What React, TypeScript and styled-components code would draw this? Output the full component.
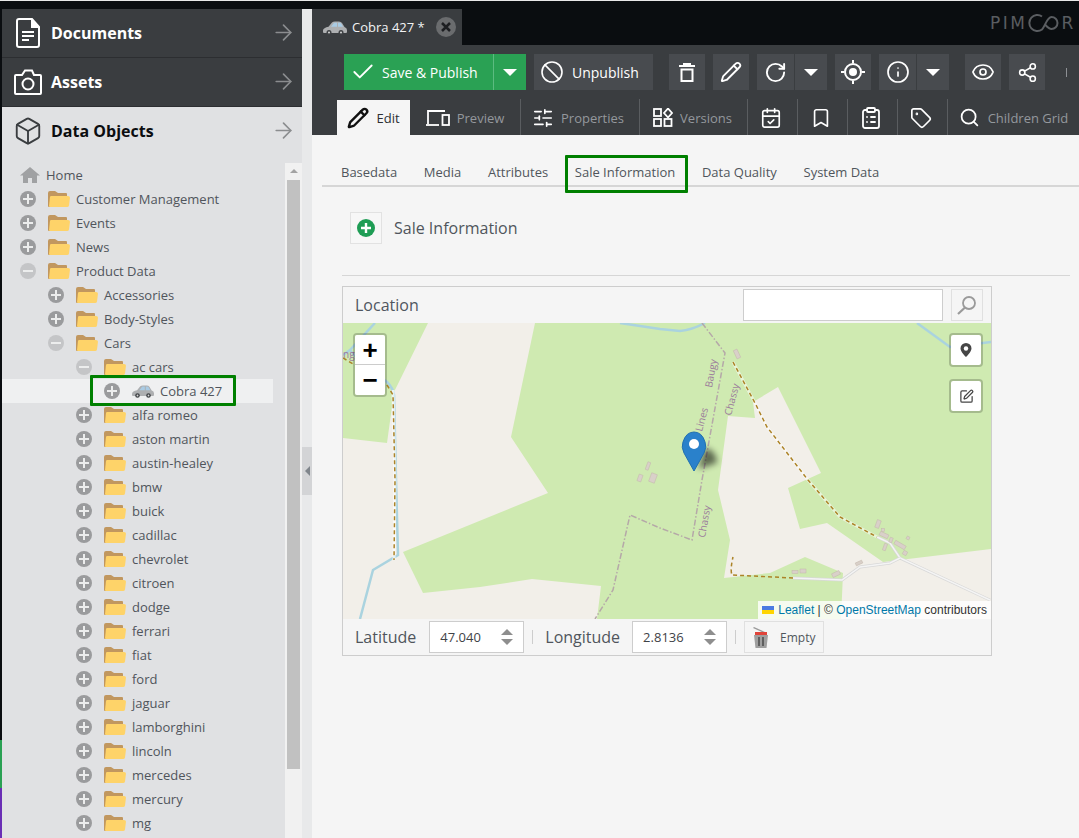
import { FC, ReactNode } from "react"
import styled, { createGlobalStyle } from "styled-components"
import {
  ArrowRight, Ban, Bookmark, Box, CalendarCheck, Check, ClipboardList, Eye, Info, Pencil,
  RotateCw, Search, Share2, SlidersHorizontal, SquarePen, Tag,
} from "lucide-react"

const GlobalStyle = createGlobalStyle`
  html, body {
    margin: 0;
    padding: 0;
    background: #f5f5f5;
  }
  * {
    box-sizing: border-box;
  }
`

const Page = styled.div`
  display: flex;
  width: 1079px;
  height: 838px;
  overflow: hidden;
  border-top: 1px solid #e8e8e8;
  background: #0a0d10;
  font-family: "Open Sans", sans-serif;
  font-size: 13px;
  color: #50555c;
`

const Strip = styled.div`
  display: flex;
  flex-direction: column;
  flex: 0 0 2px;
`

const StripPart = styled.div<{ $color: string; $size: number }>`
  flex: 0 0 ${(p) => p.$size}px;
  background: ${(p) => p.$color};
`

const Sidebar = styled.aside`
  display: flex;
  flex-direction: column;
  flex: 0 0 300px;
  margin-top: 8px;
  background: #e0e1e3;
`

const AccordionHead = styled.div<{ $open?: boolean }>`
  display: flex;
  align-items: center;
  flex: 0 0 49px;
  padding: 0 6px 1px 11px;
  background: ${(p) => (p.$open ? "#e0e1e3" : "#3a3d40")};
  border-bottom: 1px solid ${(p) => (p.$open ? "transparent" : "#2c2e31")};
  color: ${(p) => (p.$open ? "#0b0d10" : "#fff")};
  font-size: 16px;
  font-weight: 700;
`

const HeadIcon = styled.span`
  display: flex;
  justify-content: center;
  flex: 0 0 30px;
  margin-right: 8px;
`

const HeadTitle = styled.span`
  flex: 1;
`

const TreeArea = styled.div`
  display: flex;
  flex: 1;
  min-height: 0;
  margin-top: 7px;
`

const TreeList = styled.div`
  flex: 1;
  padding-right: 12px;
`

const Row = styled.div<{ $level: number; $selected?: boolean }>`
  position: relative;
  display: flex;
  align-items: center;
  height: 24px;
  padding-left: ${(p) => 18 + p.$level * 28}px;
  background: ${(p) => (p.$selected ? "#eff0f1" : "transparent")};
  white-space: nowrap;
`

const Highlight = styled.div`
  position: absolute;
  left: 88px;
  top: -4px;
  width: 146px;
  height: 31px;
  border: 3px solid #008000;
  border-radius: 1px;
`

const Expander = styled.span<{ $open?: boolean }>`
  position: relative;
  flex: 0 0 16px;
  height: 16px;
  margin-right: 12px;
  border-radius: 50%;
  background: ${(p) => (p.$open ? "#c4c5c7" : "#9a9b9d")};

  &::before {
    content: "";
    position: absolute;
    left: 3px;
    top: 7px;
    width: 10px;
    height: 2px;
    background: #eceded;
  }

  &::after {
    content: "";
    display: ${(p) => (p.$open ? "none" : "block")};
    position: absolute;
    left: 7px;
    top: 3px;
    width: 2px;
    height: 10px;
    background: #eceded;
  }
`

const NodeLabel = styled.span`
  margin-left: 6px;
`

const HomeLabel = styled.span`
  margin-left: 6px;
`

const Scrollbar = styled.div`
  display: flex;
  flex-direction: column;
  flex: 0 0 17px;
  padding: 0 2px;
  background: #f1f1f1;
`

const ScrollUp = styled.div`
  flex: 0 0 17px;
  display: flex;
  justify-content: center;
  padding-top: 6px;

  &::before {
    content: "";
    width: 0;
    height: 0;
    border-left: 4px solid transparent;
    border-right: 4px solid transparent;
    border-bottom: 4px solid #a3a3a3;
  }
`

const ScrollThumb = styled.div`
  flex: 0 0 589px;
  background: #c1c1c1;
`

const Collapser = styled.div`
  flex: 0 0 10px;
  margin-top: 8px;
  padding-top: 438px;
  background: #e8e9ea;
`

const CollapserHandle = styled.div`
  display: flex;
  align-items: center;
  justify-content: center;
  height: 48px;
  background: #d3d4d6;

  &::before {
    content: "";
    width: 0;
    height: 0;
    border-top: 5px solid transparent;
    border-bottom: 5px solid transparent;
    border-right: 5px solid #80868c;
  }
`

const Main = styled.main`
  display: flex;
  flex-direction: column;
  flex: 1;
  min-width: 0;
`

const TopBar = styled.div`
  display: flex;
  justify-content: space-between;
  flex: 0 0 44px;
  padding-top: 8px;
`

const DocTab = styled.div`
  display: flex;
  align-items: center;
  width: 150px;
  padding: 0 6px 0 11px;
  background: #3a3d40;
  color: #f2f3f4;
  white-space: nowrap;
`

const DocTabTitle = styled.span`
  flex: 1;
  margin-left: 5px;
`

const CloseBadge = styled.span`
  display: flex;
  align-items: center;
  justify-content: center;
  width: 20px;
  height: 20px;
  border-radius: 50%;
  background: #6a6c6e;
  color: #1d1f22;
`

const Logo = styled.div`
  display: flex;
  align-items: center;
  width: 89px;
  height: 20px;
  margin-top: 4px;
  color: #5a5d61;
  font-family: "DejaVu Sans", sans-serif;
  font-size: 17px;
  letter-spacing: 2.5px;
  white-space: nowrap;
`

const LogoMark = styled.svg`
  flex: 0 0 32px;
  margin: 0 2px 0 0;
`

const Toolbar = styled.div`
  display: flex;
  flex-direction: column;
  flex: 0 0 90px;
  background: #3a3d40;
`

const ButtonRow = styled.div`
  display: flex;
  align-items: center;
  margin-top: 9px;
  padding-left: 32px;
`

const Btn = styled.div<{ $w: number; $after?: number; $green?: boolean; $start?: number }>`
  display: flex;
  align-items: center;
  justify-content: ${(p) => (p.$start ? "flex-start" : "center")};
  flex: 0 0 ${(p) => p.$w}px;
  height: 36px;
  margin-right: ${(p) => p.$after ?? 0}px;
  padding-left: ${(p) => p.$start ?? 0}px;
  background: ${(p) => (p.$green ? "#2aa154" : "#484b4f")};
  color: #fff;
  font-size: 14px;
  white-space: nowrap;
`

const BtnText = styled.span<{ $gap: number }>`
  margin-left: ${(p) => p.$gap}px;
`

const Caret = styled.span`
  width: 0;
  height: 0;
  border-left: 7px solid transparent;
  border-right: 7px solid transparent;
  border-top: 7px solid #fff;
`

const SplitLine = styled.div`
  flex: 0 0 1px;
  height: 36px;
  background: #5cbb80;
`

const Tick = styled.span`
  margin-left: 21px;
  width: 1px;
  height: 9px;
  background: #8d9094;
`

const TabRow = styled.div`
  display: flex;
  align-items: flex-end;
  height: 36px;
  margin-top: 9px;
  padding-left: 25px;
`

const ViewTab = styled.div<{ $w: number; $active?: boolean; $last?: boolean; $nudge?: number }>`
  display: flex;
  align-items: center;
  justify-content: center;
  gap: ${(p) => (p.$last ? 8 : 7)}px;
  flex: 0 0 ${(p) => p.$w}px;
  height: ${(p) => (p.$active ? 35 : 36)}px;
  padding: 1px ${(p) => p.$nudge ?? 0}px 0 0;
  background: ${(p) => (p.$active ? "#f5f5f5" : "transparent")};
  border-right: ${(p) => (p.$active || p.$last ? "none" : "1px solid #5a5d60")};
  color: ${(p) => (p.$active ? "#2d2f33" : "#94989d")};
  white-space: nowrap;
`

const Content = styled.div`
  flex: 1;
  min-height: 0;
  background: #f5f5f5;
`

const InnerTabs = styled.div`
  display: flex;
  gap: 26.7px;
  height: 52px;
  margin-left: 10px;
  padding: 27px 0 0 19px;
  border-bottom: 2px solid #d6d6d6;
`

const InnerTab = styled.span`
  position: relative;
  line-height: 20px;
  white-space: nowrap;
`

const InnerHighlight = styled.span`
  position: absolute;
  left: -10px;
  top: -7px;
  width: 123px;
  height: 38px;
  border: 3px solid #008000;
  border-radius: 1px;
`

const BlockHead = styled.div`
  display: flex;
  align-items: center;
  margin: 25px 9px 0 30px;
  padding: 0 8px 31px;
  border-bottom: 1px solid #d6d6d6;
  font-size: 16px;
`

const AddButton = styled.div`
  display: flex;
  align-items: center;
  justify-content: center;
  width: 32px;
  height: 32px;
  margin-right: 12px;
  border: 1px solid #e2e2e2;
  background: #f7f7f7;
`

const LocationPanel = styled.section`
  display: flex;
  flex-direction: column;
  width: 650px;
  height: 370px;
  margin: 10px 0 0 30px;
  border: 1px solid #cdcdcd;
`

const PanelHead = styled.div`
  display: flex;
  align-items: center;
  flex: 0 0 36px;
  padding: 0 8px 1px 12px;
  font-size: 16px;
  color: #50565f;
`

const PanelTitle = styled.span`
  flex: 1;
`

const SearchInput = styled.div`
  width: 200px;
  height: 32px;
  margin-right: 8px;
  border: 1px solid #cdcdcd;
  background: #fff;
`

const SearchButton = styled.div`
  display: flex;
  align-items: center;
  justify-content: center;
  width: 32px;
  height: 32px;
  border: 1px solid #e0e0e0;
`

const MapBox = styled.div`
  position: relative;
  flex: 0 0 296px;
  overflow: hidden;
  background: #f2efe9;
`

const MapSvg = styled.svg`
  display: block;
`

const ZoomControl = styled.div`
  position: absolute;
  left: 10px;
  top: 10px;
  width: 34px;
  border: 2px solid rgba(0, 0, 0, 0.2);
  border-radius: 4px;
  background-clip: padding-box;
`

const ZoomKey = styled.div<{ $top?: boolean }>`
  display: flex;
  align-items: center;
  justify-content: center;
  height: 30px;
  background: #fff;
  border-bottom: ${(p) => (p.$top ? "1px solid #ccc" : "none")};
  border-radius: ${(p) => (p.$top ? "2px 2px 0 0" : "0 0 2px 2px")};
  color: #000;
  font-family: "Liberation Sans", sans-serif;
  font-size: 26px;
  font-weight: 700;
  line-height: 30px;
`

const MapTools = styled.div`
  position: absolute;
  right: 8px;
  top: 10px;
  display: flex;
  flex-direction: column;
  gap: 12px;
`

const MapTool = styled.div`
  display: flex;
  align-items: center;
  justify-content: center;
  width: 34px;
  height: 34px;
  border: 2px solid rgba(0, 0, 0, 0.2);
  border-radius: 4px;
  background: #fff;
  background-clip: padding-box;
  color: #464646;
`

const Attribution = styled.div`
  position: absolute;
  right: 0;
  bottom: 0;
  height: 18px;
  padding: 0 4px;
  background: rgba(255, 255, 255, 0.8);
  color: #333;
  font-family: "Liberation Sans", sans-serif;
  font-size: 12px;
  line-height: 18px;
  white-space: nowrap;
`

const Flag = styled.svg`
  margin-right: 4px;
`

const AttrLink = styled.span`
  color: #0078a8;
`

const PanelFoot = styled.div`
  display: flex;
  align-items: center;
  flex: 1;
  padding-left: 12px;
  font-size: 16px;
`

const FootLabel = styled.span<{ $gap: number }>`
  margin-right: ${(p) => p.$gap}px;
`

const NumberField = styled.div`
  display: flex;
  align-items: center;
  justify-content: space-between;
  width: 95px;
  height: 32px;
  padding: 0 10px;
  border: 1px solid #cdcdcd;
  background: #fff;
  font-size: 13px;
  color: #3f4347;
`

const Spinner = styled.span`
  display: flex;
  flex-direction: column;
  gap: 4px;

  &::before,
  &::after {
    content: "";
    width: 0;
    height: 0;
    border-left: 6px solid transparent;
    border-right: 6px solid transparent;
  }

  &::before {
    border-bottom: 6px solid #8e8e8e;
  }

  &::after {
    border-top: 6px solid #8e8e8e;
  }
`

const FootSep = styled.span`
  width: 1px;
  height: 14px;
  margin: 0 12px 0 8px;
  background: #cdcdcd;
`

const EmptyButton = styled.div`
  display: flex;
  align-items: center;
  gap: 11px;
  width: 80px;
  height: 32px;
  margin-left: -4px;
  padding-left: 8px;
  border: 1px solid #e0e0e0;
  font-size: 12px;
`

const MapLabel = styled.text`
  fill: #9b7c9b;
  font-family: "Open Sans", sans-serif;
  font-size: 10px;
`

const Folder: FC = () => (
  <svg width="22" height="16" viewBox="0 0 22 16">
    <path d="M0 2q0-2 2-2h5l3 2h8q1 0 1 1v2H6L3 16H1q-1 0-1-1z" fill="#c1975f" />
    <path d="M2 16q-1 0-1-1L2 6q.2-1 1-1h17q2 0 2 1.500l-1 8q-.2 1.500-2 1.500z" fill="#fed369" />
  </svg>
)

const Car: FC<{ size?: number }> = ({ size = 24 }) => (
  <svg width={size} height={size * 0.625} viewBox="0 0 24 15">
    <path d="M0 11C0 8.500 2.500 7.500 5.500 6.800L9 2.500Q10 1.500 12 1.500h4q2 0 3 1.500l2.500 4q2.500 .8 2.500 3v2q0 1-1 1H1q-1 0-1-1z" fill="#adafb1" />
    <path d="M8 6.800l2.500-3.300q.4-.7 1.200-.7H14v4zM15 2.800h1.500q1.200 0 1.800 1L20 6.800h-5z" fill="#a9cbe4" />
    <circle cx="6" cy="12.500" r="2.500" fill="#3e4144" />
    <circle cx="6" cy="12.500" r="1" fill="#d5d6d7" />
    <circle cx="18" cy="12.500" r="2.500" fill="#3e4144" />
    <circle cx="18" cy="12.500" r="1" fill="#d5d6d7" />
  </svg>
)

const Home: FC = () => (
  <svg width="20" height="16" viewBox="0 0 20 16">
    <path d="M10 0L0 8.500h3V16h5v-5h4v5h5V8.500h3z" fill="#a0a1a3" />
  </svg>
)

const DocumentIcon: FC = () => (
  <svg width="24" height="30" viewBox="0 0 24 30" fill="none" stroke="#fff" strokeWidth="2">
    <path d="M3 1h13l7 8v18q0 2-2 2H3q-2 0-2-2V3q0-2 2-2z" />
    <path d="M16 1v8h7" fill="#fff" />
    <path d="M6 14h12M6 18h12M6 22h7" />
  </svg>
)

const CameraIcon: FC = () => (
  <svg width="28" height="26" viewBox="0 0 28 26" fill="none" stroke="#fff" strokeWidth="2">
    <path d="M2 6h6l3-4.500h7L20 6h6q1 0 1 1v17q0 1-1 1H2q-1 0-1-1V7q0-1 1-1z" />
    <circle cx="14" cy="15" r="5.500" />
  </svg>
)

const TrashIcon: FC = () => (
  <svg width="16" height="19" viewBox="0 0 16 19" fill="none" stroke="#fff" strokeWidth="2">
    <path d="M0 3h16" />
    <path d="M5 3V1h6v2" />
    <path d="M2.500 6.500h11V18h-11z" />
  </svg>
)

const TargetIcon: FC = () => (
  <svg width="24" height="24" viewBox="0 0 24 24" fill="none" stroke="#fff" strokeWidth="2">
    <circle cx="12" cy="12" r="8" />
    <circle cx="12" cy="12" r="4" fill="#fff" stroke="none" />
    <path d="M12 0v3M12 21v3M0 12h3M21 12h3" />
  </svg>
)

const PreviewIcon: FC = () => (
  <svg width="24" height="16" viewBox="0 0 24 16" fill="none" stroke="#fff" strokeWidth="1.800">
    <path d="M2 14V1h17" />
    <path d="M0 15h13" />
    <rect x="16.500" y="5" width="6.500" height="10" />
  </svg>
)

const VersionsIcon: FC = () => (
  <svg width="20" height="19" viewBox="0 0 20 19" fill="none" stroke="#fff" strokeWidth="1.800">
    <rect x="1" y="1" width="7" height="7" />
    <path d="M15 .5l4 4.500-4 4.500-4-4.500z" />
    <rect x="1" y="11" width="7" height="7" />
    <rect x="11.500" y="11" width="7" height="7" />
  </svg>
)

const PinIcon: FC = () => (
  <svg width="12" height="14" viewBox="0 0 12 14">
    <path d="M6 0a5.500 5.500 0 0 0-5.500 5.500C.5 9 6 14 6 14s5.500-5 5.500-8.500A5.500 5.500 0 0 0 6 0z" fill="#464646" />
    <circle cx="6" cy="5.500" r="2.200" fill="#fff" />
  </svg>
)

const MagnifierIcon: FC = () => (
  <svg width="20" height="20" viewBox="0 0 20 20" fill="none" stroke="#9a9a9a">
    <circle cx="12" cy="8" r="6" strokeWidth="1.800" />
    <path d="M8 12.500L1 19" strokeWidth="2.200" />
  </svg>
)

const BinIcon: FC = () => (
  <svg width="16" height="21" viewBox="0 0 16 21">
    <path d="M1 0l11 5-1 1L0 1z" fill="#9a9a9a" />
    <path d="M2 5h12v3H2z" fill="#e0443a" />
    <path d="M1 8h14l-1.500 13h-11z" fill="#9f9f9f" />
    <path d="M5 10h2v9H5zM9 10h2v9H9z" fill="#5f5f5f" />
  </svg>
)

const CloseIcon: FC = () => (
  <svg width="10" height="10" viewBox="0 0 10 10" stroke="currentColor" strokeWidth="2.500">
    <path d="M1 1l8 8M9 1l-8 8" />
  </svg>
)

const PlusIcon: FC = () => (
  <svg width="18" height="18" viewBox="0 0 18 18">
    <circle cx="9" cy="9" r="9" fill="#1f9d55" />
    <path d="M4 9h10M9 4v10" stroke="#fff" strokeWidth="2.400" />
  </svg>
)

const buildings = [
  [648, 466, 3, 8, 20], [653, 478, 6, 9, 20], [640, 478, 4, 7, 20], [737, 354, 4, 9, -25],
  [878, 524, 4, 8, 20], [883, 530, 3, 3, 0], [884, 535, 9, 4, 25], [891, 540, 3, 5, 20],
  [900, 545, 12, 4, 30], [908, 538, 3, 3, 30], [885, 547, 3, 7, 20], [905, 553, 4, 4, 30],
  [859, 563, 7, 3, -25], [795, 572, 6, 3, 0], [803, 571, 6, 4, 0], [836, 574, 8, 4, -25],
]

const MapDrawing: FC = () => (
  <MapSvg width="648" height="296" viewBox="343 323 648 296">
    <defs>
      <filter id="marker-shadow" x="-50%" y="-50%" width="200%" height="200%">
        <feGaussianBlur stdDeviation="3" />
      </filter>
    </defs>
    <path
      d="M343 323H428L394 392L387 443L343 438Z M535 323H992V549L883 562L827 523L800 529L788 488L821 473L778 387L753 402L755 418L728 416L718 490L730 540L724 578L770 573L805 557L843 573L841 619H597L601 586L532 579L480 587L423 593L403 552L548 493L511 437Z"
      fill="#cfeab1"
    />
    <g fill="none" stroke="#aad3df" strokeWidth="2.500">
      <path d="M375 323L350 350L343 355M350 350L360 362L387 382Q393 388 394 395L396 480L398 555L373 570L360 619" />
      <path d="M620 323L660 329L680 331Q692 330 705 323" />
      <path d="M917 323L950 347L991 342" />
    </g>
    <g fill="none">
      <path d="M877 537L890 543L900 558L990 600" stroke="#d8d8d8" strokeWidth="3" />
      <path d="M877 537L890 543L900 558L990 600" stroke="#f4f4f4" strokeWidth="1.500" />
      <path d="M900 558L890 563L860 567L842 580L793 578" stroke="#d8d8d8" strokeWidth="3" />
      <path d="M900 558L890 563L860 567L842 580L793 578" stroke="#f4f4f4" strokeWidth="1.500" />
      <path d="M733 362L755 403L767 427L808 480L840 517L877 537" stroke="#fff" strokeWidth="3" opacity="0.5" />
      <path d="M393 390L395 480L394 560" stroke="#fff" strokeWidth="3" opacity="0.7" />
    </g>
    <g fill="none" stroke="#ac8327" strokeWidth="1.500" strokeDasharray="4 3">
      <path d="M387 385L393 395L395 480L394 560" />
      <path d="M343 358L355 365" />
      <path d="M733 362L755 403L767 427L808 480L840 517L877 537" />
      <path d="M793 578L732 575Q730 570 733 557" />
    </g>
    <path
      d="M702 323L725 353L702 480L692 540L660 528L630 515L613 590L595 619"
      fill="none"
      stroke="#b5a8a8"
      strokeWidth="1.500"
      strokeDasharray="6 2 1.500 2"
    />
    {buildings.map(([x, y, w, h, r]) => (
      <rect
        key={`${x}-${y}`}
        x={x - w / 2}
        y={y - h / 2}
        width={w}
        height={h}
        transform={`rotate(${r} ${x} ${y})`}
        fill="#d9d0c9"
        stroke="#c4b8ac"
        strokeWidth="0.500"
      />
    ))}
    <MapLabel x="343" y="358">nga</MapLabel>
    <MapLabel transform="translate(712 388) rotate(-80)">Baugy</MapLabel>
    <MapLabel transform="translate(731 416) rotate(-75)">Chassy</MapLabel>
    <MapLabel transform="translate(702 432) rotate(-75)">Lines</MapLabel>
    <MapLabel transform="translate(705 538) rotate(-80)">Chassy</MapLabel>
    <path d="M698 469L717 463Q716 450 705 448z" fill="#000" opacity="0.55" filter="url(#marker-shadow)" />
    <path d="M694 471L684 453Q681 447 683 442Q686 432 694 432Q702 432 705 442Q707 447 704 453z" fill="#2a81cb" stroke="#2170b0" />
    <circle cx="694" cy="444" r="5" fill="#fff" />
  </MapSvg>
)

type Node = { label: string; level: number; open?: boolean; car?: boolean }

const tree: Node[] = [
  { label: "Customer Management", level: 0 },
  { label: "Events", level: 0 },
  { label: "News", level: 0 },
  { label: "Product Data", level: 0, open: true },
  { label: "Accessories", level: 1 },
  { label: "Body-Styles", level: 1 },
  { label: "Cars", level: 1, open: true },
  { label: "ac cars", level: 2, open: true },
  { label: "Cobra 427", level: 3, car: true },
  ...["alfa romeo", "aston martin", "austin-healey", "bmw", "buick", "cadillac", "chevrolet", "citroen", "dodge", "ferrari", "fiat", "ford", "jaguar", "lamborghini", "lincoln", "mercedes", "mercury", "mg"].map(
    (label) => ({ label, level: 2 }),
  ),
]

const Accordion: FC<{ icon: ReactNode; title: string; open?: boolean }> = ({ icon, title, open }) => (
  <AccordionHead $open={open}>
    <HeadIcon>{icon}</HeadIcon>
    <HeadTitle>{title}</HeadTitle>
    <ArrowRight size={25} color="#8b8d8f" strokeWidth={1.6} />
  </AccordionHead>
)

const App: FC = () => {
  return (
    <Page>
      <GlobalStyle />
      <Strip>
        <StripPart $color="#0a0d10" $size={739} />
        <StripPart $color="#2aa154" $size={48} />
        <StripPart $color="#6a2fb5" $size={50} />
      </Strip>
      <Sidebar>
        <Accordion icon={<DocumentIcon />} title="Documents" />
        <Accordion icon={<CameraIcon />} title="Assets" />
        <Accordion icon={<Box size={30} color="#3a3d40" strokeWidth={1.5} />} title="Data Objects" open />
        <TreeArea>
          <TreeList>
            <Row $level={0}>
              <Home />
              <HomeLabel>Home</HomeLabel>
            </Row>
            {tree.map((node) => (
              <Row key={node.label} $level={node.level} $selected={node.car}>
                {node.car && <Highlight />}
                <Expander $open={node.open} />
                {node.car ? <Car size={22} /> : <Folder />}
                <NodeLabel>{node.label}</NodeLabel>
              </Row>
            ))}
          </TreeList>
          <Scrollbar>
            <ScrollUp />
            <ScrollThumb />
          </Scrollbar>
        </TreeArea>
      </Sidebar>
      <Collapser>
        <CollapserHandle />
      </Collapser>
      <Main>
        <TopBar>
          <DocTab>
            <Car />
            <DocTabTitle>Cobra 427 *</DocTabTitle>
            <CloseBadge>
              <CloseIcon />
            </CloseBadge>
          </DocTab>
          <Logo>
            PIM
            <LogoMark width="32" height="20" viewBox="0 0 32 20" fill="none" stroke="currentColor" strokeWidth="2">
              <path d="M15 3.500A8 8 0 1 0 15 16.500C18 13.500 20 4 24.500 4A6 6 0 0 1 24.500 16C21.500 16 19.500 13 17.500 11" />
            </LogoMark>
            R
          </Logo>
        </TopBar>
        <Toolbar>
          <ButtonRow>
            <Btn $w={149} $start={6} $green>
              <Check size={26} strokeWidth={1.7} />
              <BtnText $gap={6}>Save &amp; Publish</BtnText>
            </Btn>
            <SplitLine />
            <Btn $w={32} $after={8} $green>
              <Caret />
            </Btn>
            <Btn $w={119} $start={6} $after={16}>
              <Ban size={24} strokeWidth={1.6} />
              <BtnText $gap={8}>Unpublish</BtnText>
            </Btn>
            <Btn $w={36} $after={8}>
              <TrashIcon />
            </Btn>
            <Btn $w={36} $after={8}>
              <Pencil size={22} strokeWidth={2} />
            </Btn>
            <Btn $w={37} $after={1}>
              <RotateCw size={23} strokeWidth={2} />
            </Btn>
            <Btn $w={32} $after={8}>
              <Caret />
            </Btn>
            <Btn $w={36} $after={8}>
              <TargetIcon />
            </Btn>
            <Btn $w={37} $after={1}>
              <Info size={24} strokeWidth={1.7} />
            </Btn>
            <Btn $w={32} $after={16}>
              <Caret />
            </Btn>
            <Btn $w={36} $after={8}>
              <Eye size={24} strokeWidth={1.7} />
            </Btn>
            <Btn $w={36}>
              <Share2 size={21} strokeWidth={1.8} />
            </Btn>
            <Tick />
          </ButtonRow>
          <TabRow>
            <ViewTab $w={73} $active>
              <Pencil size={22} color="#111" strokeWidth={2.6} />
              Edit
            </ViewTab>
            <ViewTab $w={111}>
              <PreviewIcon />
              Preview
            </ViewTab>
            <ViewTab $w={119} $nudge={4}>
              <SlidersHorizontal size={22} color="#fff" strokeWidth={1.8} />
              Properties
            </ViewTab>
            <ViewTab $w={108} $nudge={2}>
              <VersionsIcon />
              Versions
            </ViewTab>
            <ViewTab $w={50} $nudge={4}>
              <CalendarCheck size={22} color="#fff" strokeWidth={1.8} />
            </ViewTab>
            <ViewTab $w={50} $nudge={4}>
              <Bookmark size={22} color="#fff" strokeWidth={1.8} />
            </ViewTab>
            <ViewTab $w={50} $nudge={4}>
              <ClipboardList size={24} color="#fff" strokeWidth={1.8} />
            </ViewTab>
            <ViewTab $w={50} $nudge={4}>
              <Tag size={22} color="#fff" strokeWidth={1.8} />
            </ViewTab>
            <ViewTab $w={131} $last>
              <Search size={21} color="#fff" strokeWidth={2} />
              Children Grid
            </ViewTab>
          </TabRow>
        </Toolbar>
        <Content>
          <InnerTabs>
            <InnerTab>Basedata</InnerTab>
            <InnerTab>Media</InnerTab>
            <InnerTab>Attributes</InnerTab>
            <InnerTab>
              Sale Information
              <InnerHighlight />
            </InnerTab>
            <InnerTab>Data Quality</InnerTab>
            <InnerTab>System Data</InnerTab>
          </InnerTabs>
          <BlockHead>
            <AddButton>
              <PlusIcon />
            </AddButton>
            Sale Information
          </BlockHead>
          <LocationPanel>
            <PanelHead>
              <PanelTitle>Location</PanelTitle>
              <SearchInput />
              <SearchButton>
                <MagnifierIcon />
              </SearchButton>
            </PanelHead>
            <MapBox>
              <MapDrawing />
              <ZoomControl>
                <ZoomKey $top>+</ZoomKey>
                <ZoomKey>−</ZoomKey>
              </ZoomControl>
              <MapTools>
                <MapTool>
                  <PinIcon />
                </MapTool>
                <MapTool>
                  <SquarePen size={15} strokeWidth={2} />
                </MapTool>
              </MapTools>
              <Attribution>
                <Flag width="12" height="8" viewBox="0 0 12 8">
                  <rect width="12" height="4" fill="#4c7be1" />
                  <rect y="4" width="12" height="4" fill="#ffd500" />
                </Flag>
                <AttrLink>Leaflet</AttrLink> | © <AttrLink>OpenStreetMap</AttrLink> contributors
              </Attribution>
            </MapBox>
            <PanelFoot>
              <FootLabel $gap={13}>Latitude</FootLabel>
              <NumberField>
                47.040
                <Spinner />
              </NumberField>
              <FootSep />
              <FootLabel $gap={12}>Longitude</FootLabel>
              <NumberField>
                2.8136
                <Spinner />
              </NumberField>
              <FootSep />
              <EmptyButton>
                <BinIcon />
                Empty
              </EmptyButton>
            </PanelFoot>
          </LocationPanel>
        </Content>
      </Main>
    </Page>
  )
}

export default App
